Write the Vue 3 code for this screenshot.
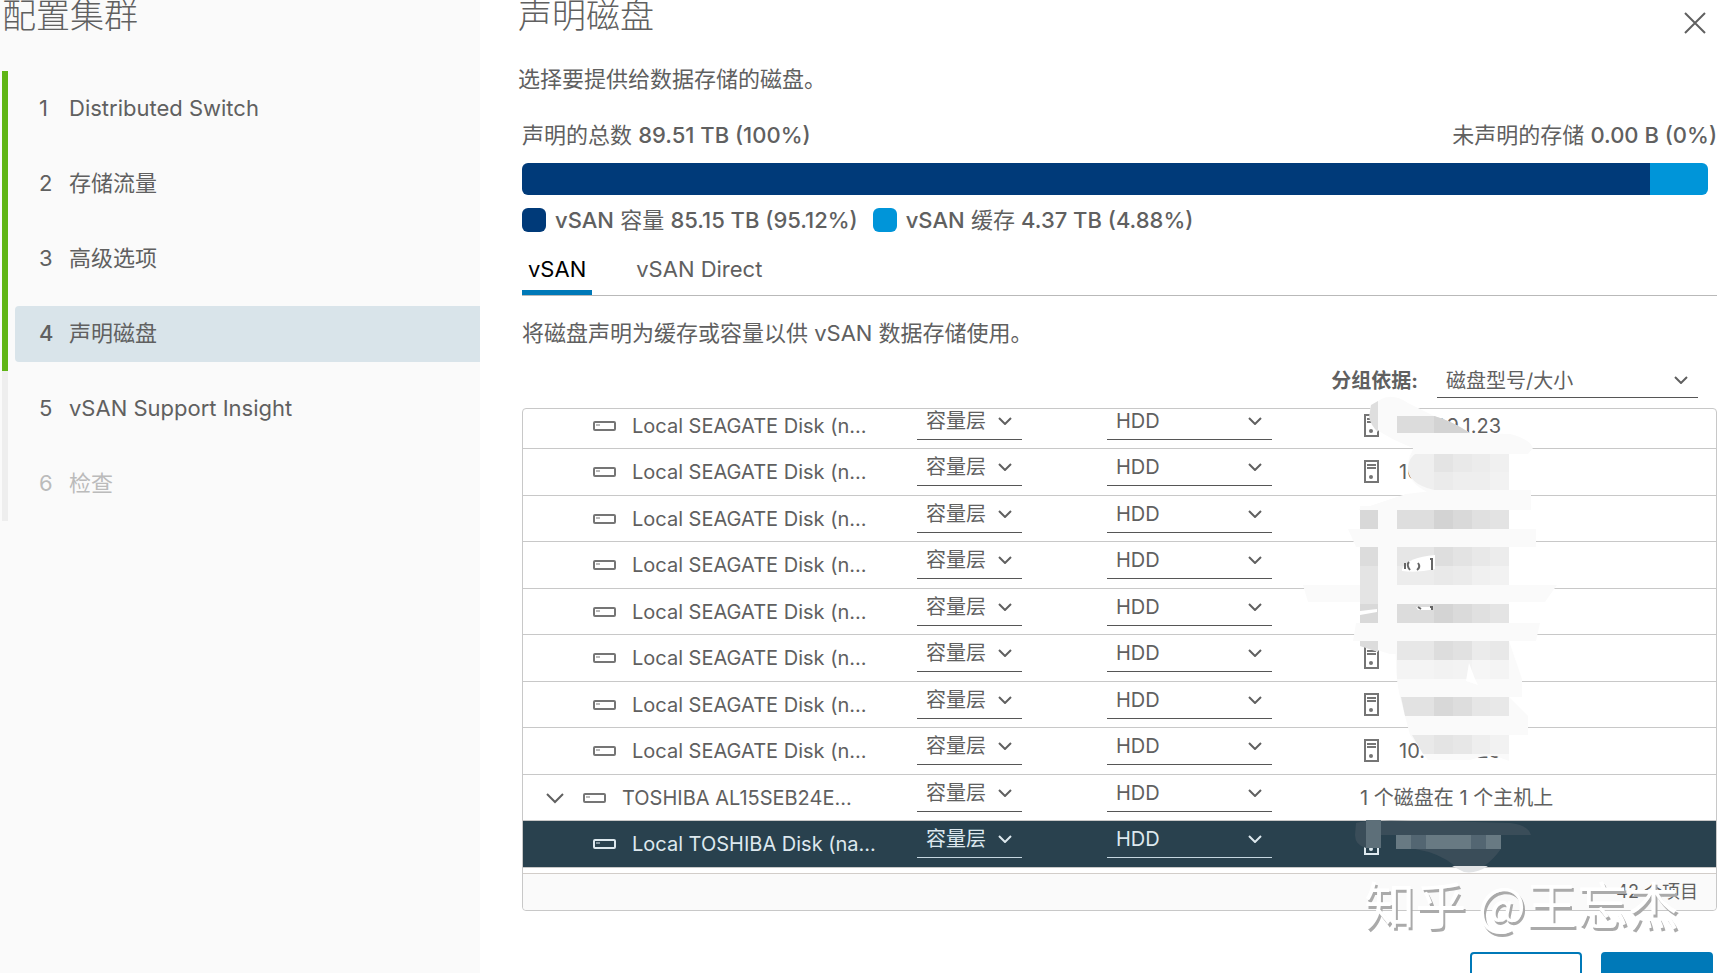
<template>
  <div class="wizard">
    <aside class="sidebar">
      <h1 class="title">配置集群</h1>
      <nav class="steps">
        <button
          v-for="(step, i) in steps"
          :key="step"
          type="button"
          class="step"
          :class="{ done: i < 4, active: i === current }"
          :disabled="i === 5"
          @click="current = i"
        >
          <span class="step-inner">
            <span class="step-num">{{ i + 1 }}</span>
            <span>{{ step }}</span>
          </span>
        </button>
      </nav>
    </aside>

    <main class="content">
      <header class="header">
        <h2 class="title">声明磁盘</h2>
        <button type="button" class="close" aria-label="关闭">
          <svg width="22" height="22" viewBox="0 0 22 22">
            <path d="M1 1L21 21M21 1L1 21" />
          </svg>
        </button>
      </header>
      <p class="intro">选择要提供给数据存储的磁盘。</p>

      <section class="panel">
        <!-- 容量统计 -->
        <div class="totals">
          <span>声明的总数 <b>89.51 TB (100%)</b></span>
          <span>未声明的存储 <b>0.00 B (0%)</b></span>
        </div>
        <div class="bar">
          <div
            v-for="item in usage"
            :key="item.label"
            :class="item.type"
            :style="{ width: item.percent + '%' }"
          ></div>
        </div>
        <div class="legend">
          <span v-for="item in usage" :key="item.label" class="legend-item">
            <i class="swatch" :class="item.type"></i>
            <span><b>vSAN</b> {{ item.label }} <b>{{ item.size }} ({{ item.percent }}%)</b></span>
          </span>
        </div>

        <div class="tabs" role="tablist">
          <button
            v-for="name in tabs"
            :key="name"
            type="button"
            role="tab"
            class="tab"
            :class="{ active: tab === name }"
            :aria-selected="tab === name"
            @click="tab = name"
          >{{ name }}</button>
        </div>
        <p class="desc">将磁盘声明为缓存或容量以供 vSAN 数据存储使用。</p>

        <div class="group-by">
          <label for="group">分组依据:</label>
          <span class="select wide">
            <select id="group" v-model="group">
              <option>磁盘型号/大小</option>
              <option>主机</option>
            </select>
            <svg width="14" height="8" viewBox="0 0 14 8"><path d="M1 1L7 7L13 1" /></svg>
          </span>
        </div>

        <!-- 磁盘列表 -->
        <div class="grid">
          <div class="grid-body">
            <table>
              <tbody>
                <tr v-for="(disk, i) in disks" :key="i" :class="{ group: disk.group, selected: disk.selected }">
                  <td class="col-name">
                    <div class="name">
                      <button v-if="disk.group" type="button" class="toggle" aria-label="折叠">
                        <svg width="18" height="12" viewBox="0 0 18 12"><path d="M1 2L9 10L17 2" /></svg>
                      </button>
                      <svg class="disk" width="23" height="10" viewBox="0 0 23 10">
                        <rect x="1" y="1" width="21" height="8" rx="1" />
                        <path d="M3 4H7" />
                      </svg>
                      <span>{{ disk.name }}</span>
                    </div>
                  </td>
                  <td class="col-tier">
                    <span class="select tier">
                      <select v-model="disk.tier" aria-label="声明为">
                        <option>容量层</option>
                        <option>缓存层</option>
                      </select>
                      <svg width="14" height="8" viewBox="0 0 14 8"><path d="M1 1L7 7L13 1" /></svg>
                    </span>
                  </td>
                  <td class="col-type">
                    <span class="select type">
                      <select v-model="disk.type" aria-label="驱动器类型">
                        <option>HDD</option>
                        <option>闪存</option>
                      </select>
                      <svg width="14" height="8" viewBox="0 0 14 8"><path d="M1 1L7 7L13 1" /></svg>
                    </span>
                  </td>
                  <td class="col-host">
                    <div v-if="disk.group" class="host">{{ disk.host }}</div>
                    <div v-else class="host ip">
                      <svg class="server" width="15" height="23" viewBox="0 0 15 23">
                        <rect x="1" y="1" width="13" height="21" />
                        <path d="M3 5H12M3 8H12" />
                        <circle cx="7" cy="17" r="2" />
                      </svg>
                      <span class="address"><span>{{ disk.start }}</span><span>{{ disk.end }}</span></span>
                    </div>
                  </td>
                </tr>
              </tbody>
            </table>
          </div>
          <div class="grid-footer">42 个项目</div>

          <!-- 主机地址打码 -->
          <svg class="mask" width="270" height="480" viewBox="1300 395 270 480" aria-hidden="true">
            <g fill="#fafafa">
              <path d="M1370 410Q1386 389 1408 404L1434 417Q1452 422 1470 434L1510 435Q1530 440 1533 449L1528 455H1412L1413 449Q1390 440 1376 430Z" />
              <path d="M1415 449H1509V498H1440Q1408 488 1408 468Q1408 456 1415 449Z" />
              <path d="M1406 495L1440 491H1531V511H1358Z" />
              <path d="M1360 507H1509V655H1390L1360 646Z" />
              <path d="M1348 530H1536V548H1356Z" />
              <path d="M1303 586H1557L1545 603H1308Z" />
              <path d="M1356 624H1540L1536 642H1353Z" />
              <path d="M1395 642H1509L1522 680V698H1400Q1396 680 1396 665Z" />
              <path d="M1400 698H1509L1528 717V736H1509V762L1496 757H1484L1470 761H1428L1410 736Z" />
            </g>
            <path d="M1371 406L1378 402V433Q1371 427 1369 418Z" fill="#dedede" />
            <path d="M1397 417H1434Q1448 421 1470 434H1397Z" fill="#dcdcdc" />
            <path d="M1434 417Q1452 422 1470 434H1434Z" fill="#d3d3d3" />
            <path d="M1415 455H1434V491Q1408 485 1408 468Q1409 459 1415 455Z" fill="#efefef" />
            <rect
              v-for="(c, i) in cells"
              :key="i"
              :x="c[0]"
              :y="c[1]"
              :width="c[2]"
              :height="c[3]"
              :fill="c[4]"
            />
            <path d="M1401 698H1434V717H1405Z" fill="#e2e2e2" />
            <path d="M1412 736H1434V755H1423Z" fill="#e9e9e9" />
            <path d="M1360 642H1378V653L1360 647Z" fill="#dcdcdc" />
            <g fill="#fff">
              <path d="M1402 570Q1408 558 1435 556V570Q1418 574 1402 572Z" />
              <path d="M1416 608H1432V611H1418Z" />
              <path d="M1360 612L1377 610V613L1360 616Z" />
              <path d="M1469 664L1475 680L1478 686L1466 682Z" />
            </g>
            <g class="peek">
              <path d="M1405 570V564M1410 571Q1406 566 1409 563M1418 564Q1421 568 1417 571M1430 560H1432V571" />
              <path d="M1418 608L1421 610M1430 608H1432V611" />
            </g>
            <path d="M1356 824Q1364 821 1412 822H1440L1510 824Q1528 826 1531 836H1501V850Q1492 862 1484 867H1455Q1440 854 1415 850H1396V836H1381V849H1366Q1355 846 1355 836Z" fill="#3a4d59" />
            <path d="M1452 867H1488Q1476 875 1464 873Z" fill="#e2e4e6" />
            <rect x="1366" y="821" width="15" height="28" fill="#5d6f79" />
            <rect x="1396" y="836" width="105" height="14" fill="#687a83" />
            <path d="M1411 836H1426V850H1411ZM1471 836H1486V850H1471Z" fill="#536672" />
          </svg>
        </div>

        <footer class="actions">
          <button type="button" class="btn" aria-label="取消"></button>
          <button type="button" class="btn primary" aria-label="下一步"></button>
        </footer>
      </section>
    </main>

    <div class="watermark">知乎 @王忘杰</div>
  </div>
</template>

<script setup>
import { ref } from 'vue'

const steps = ['Distributed Switch', '存储流量', '高级选项', '声明磁盘', 'vSAN Support Insight', '检查']
const current = ref(3)

const usage = [
  { label: '容量', size: '85.15 TB', percent: 95.12, type: 'capacity' },
  { label: '缓存', size: '4.37 TB', percent: 4.88, type: 'cache' }
]

const tabs = ['vSAN', 'vSAN Direct']
const tab = ref('vSAN')
const group = ref('磁盘型号/大小')

// 每行只保留地址的首尾片段
const addresses = [
  ['', '09.1.23'],
  ['10', ''],
  ['', ''],
  ['', ''],
  ['', ''],
  ['', ''],
  ['', ''],
  ['10.', '23']
]

const disks = ref([
  ...addresses.map(([start, end]) => ({
    name: 'Local SEAGATE Disk (n...',
    tier: '容量层',
    type: 'HDD',
    start,
    end
  })),
  { name: 'TOSHIBA AL15SEB24E...', tier: '容量层', type: 'HDD', group: true, host: '1 个磁盘在 1 个主机上' },
  { name: 'Local TOSHIBA Disk (na...', tier: '容量层', type: 'HDD', selected: true, start: '', end: '' }
])

// 马赛克色块: x, y, 宽, 高, 颜色
const columns = [
  [1397, 37],
  [1434, 19],
  [1453, 19],
  [1472, 18],
  [1490, 19]
]
const bands = [
  [455, 18, ['', '#e4e4e4', '#e9e9e9', '#ececec', '#f0f0f0']],
  [473, 18, ['', '#ebebeb', '#eeeeee', '#eeeeee', '#f2f2f2']],
  [511, 19, ['#dedede', '#d3d3d3', '#d9d9d9', '#e0e0e0', '#e3e3e3']],
  [548, 19, ['#e6e6e6', '#dedede', '#e3e3e3', '#e8e8e8', '#ececec']],
  [567, 19, ['#ececec', '#e9e9e9', '#ebebeb', '#f0f0f0', '#f2f2f2']],
  [605, 19, ['#dcdcdc', '#d4d4d4', '#dadada', '#e0e0e0', '#e4e4e4']],
  [642, 19, ['#e7e7e7', '#dddddd', '#e1e1e1', '#ebebeb', '#e8e8e8']],
  [661, 19, ['#f4f4f4', '#f2f2f2', '#f3f3f3', '#f6f6f6', '#f4f4f4']],
  [698, 19, ['', '#d8d8d8', '#dddddd', '#e6e6e6', '#e8e8e8']],
  [736, 19, ['', '#e4e4e4', '#e7e7e7', '#eeeeee', '#f2f2f2']]
]
const cells = bands.flatMap(([y, h, colors]) =>
  columns.map(([x, w], i) => [x, y, w, h, colors[i]]).filter((c) => c[4])
)
cells.push(
  [1360, 511, 18, 19, '#d8d8d8'],
  [1360, 548, 18, 19, '#dcdcdc'],
  [1360, 567, 18, 38, '#e4e4e4'],
  [1360, 605, 18, 19, '#d9d9d9']
)
</script>

<style>
body {
  margin: 0;
  overflow: hidden;
}
</style>

<style scoped>
.wizard {
  position: relative;
  display: flex;
  height: 100vh;
  overflow: hidden;
  background: #fff;
  color: #606060;
  font-family: Inter, "Noto Sans CJK SC", sans-serif;
  font-size: 22px;
  line-height: 28px;
}

button,
select {
  font: inherit;
  color: inherit;
  background: none;
  border: none;
  padding: 0;
  margin: 0;
  cursor: pointer;
}

p {
  margin: 0;
}

b {
  font-weight: 500;
}

svg {
  fill: none;
  stroke: currentColor;
  stroke-width: 2;
  flex: none;
}

.title {
  margin: 0;
  height: 32px;
  font-size: 34px;
  line-height: 32px;
  font-weight: 300;
}

/* 左侧步骤 */
.sidebar {
  flex: none;
  width: 478px;
  padding-left: 2px;
  background: #fafafa;
}

.steps {
  display: flex;
  flex-direction: column;
  margin-top: 39px;
}

.step {
  height: 75px;
  padding: 0 0 0 7px;
  border-left: 6px solid #eee;
  text-align: left;
}

.step.done {
  border-left-color: #60b515;
}

.step-inner {
  display: flex;
  align-items: center;
  height: 54px;
  padding: 0 0 2px 24px;
  border-radius: 4px 0 0 4px;
}

.step.active .step-inner {
  background: #d9e4ea;
}

.step.active .step-num {
  font-weight: 500;
}

.step-num {
  width: 30px;
}

.step:disabled {
  color: #bbb;
}

/* 主区域 */
.content {
  flex: 1;
  min-width: 0;
  padding: 0 4px 0 38px;
}

.header {
  display: flex;
  justify-content: space-between;
}

.close {
  height: 22px;
  margin: 12px 11px 0 0;
}

.close svg {
  display: block;
}

.intro {
  margin-top: 31px;
}

.panel {
  margin: 28px 0 0 4px;
}

.totals {
  display: flex;
  justify-content: space-between;
}

.bar {
  display: flex;
  height: 32px;
  margin: 14px 9px 0 0;
  border-radius: 6px;
  overflow: hidden;
}

.capacity {
  background: #003a79;
}

.cache {
  background: #0095d9;
}

.legend {
  display: flex;
  gap: 15px;
  margin-top: 11px;
}

.legend-item {
  display: flex;
  align-items: center;
  gap: 9px;
}

.swatch {
  width: 24px;
  height: 24px;
  border-radius: 6px;
}

.tabs {
  display: flex;
  gap: 38px;
  margin-top: 16px;
  border-bottom: 1px solid #b9b9b9;
}

.tab {
  height: 45px;
  padding: 0 6px 2px 6px;
  border-bottom: 5px solid transparent;
}

.tab.active {
  color: #000;
  border-bottom-color: #0079b8;
}

.desc {
  margin-top: 23px;
}

.group-by {
  display: flex;
  justify-content: flex-end;
  align-items: center;
  gap: 19px;
  margin: 17px 19px 0 0;
  font-size: 20px;
}

.group-by label {
  font-weight: 700;
}

.select {
  position: relative;
  display: block;
  color: #606060;
}

.select select {
  display: block;
  width: 100%;
  height: 37px;
  padding: 0 30px 0 9px;
  border-bottom: 1px solid #565656;
  border-radius: 0;
  appearance: none;
}

.select svg {
  position: absolute;
  right: 10px;
  top: 14px;
}

.wide {
  width: 261px;
}

.wide select {
  height: 34px;
}

.wide svg {
  top: 12px;
}

/* 表格 */
.grid {
  position: relative;
  margin-top: 10px;
  border: 1px solid #c8c8c8;
  border-radius: 4px;
  font-size: 20px;
}

.grid-body {
  height: 464px;
  overflow: hidden;
}

table {
  width: 100%;
  margin-top: -6px;
  table-layout: fixed;
  border-collapse: separate;
  border-spacing: 0;
}

td {
  height: 45px;
  padding: 0;
  border-bottom: 1px solid #c8c8c8;
  vertical-align: top;
}

tr:nth-child(even) td {
  height: 46px;
}

.col-name {
  width: 394px;
}

.col-tier {
  width: 190px;
}

.col-type {
  width: 253px;
}

.name,
.host {
  display: flex;
  align-items: center;
  height: 45px;
}

.name {
  gap: 16px;
  padding-left: 70px;
  white-space: nowrap;
}

.group .name {
  padding-left: 23px;
}

.toggle {
  display: flex;
  margin-right: 3px;
}

.tier {
  width: 105px;
}

.type {
  width: 165px;
}

.disk,
.server {
  color: #757575;
}

.disk path {
  stroke-width: 1;
}

.server circle {
  fill: currentColor;
  stroke: none;
}

.ip {
  gap: 20px;
  padding-left: 4px;
}

.address {
  display: flex;
  justify-content: space-between;
  width: 102px;
}

.selected td {
  background: #29414e;
}

.selected,
.selected .select,
.selected svg {
  color: #dde8ee;
}

.selected select {
  border-bottom-color: #c5d6e0;
}

.grid-footer {
  height: 36px;
  padding-right: 18px;
  border-top: 1px solid #d2cdc9;
  border-radius: 0 0 4px 4px;
  background: #fafafa;
  font-size: 18px;
  line-height: 36px;
  text-align: right;
}

.mask {
  position: absolute;
  left: 777px;
  top: -15px;
  pointer-events: none;
  stroke: none;
}

.peek {
  stroke: #666;
}

.actions {
  display: flex;
  justify-content: flex-end;
  gap: 19px;
  margin: 41px 4px 0 0;
}

.btn {
  width: 112px;
  height: 44px;
  border: 2px solid #0079b8;
  border-radius: 4px;
}

.btn.primary {
  background: #0079b8;
}

.watermark {
  position: absolute;
  right: 42px;
  bottom: 40px;
  color: #fff;
  font-family: "Noto Sans CJK SC", sans-serif;
  font-size: 51px;
  line-height: 60px;
  text-shadow: 2px 3px 0 #aaa;
  pointer-events: none;
}
</style>
